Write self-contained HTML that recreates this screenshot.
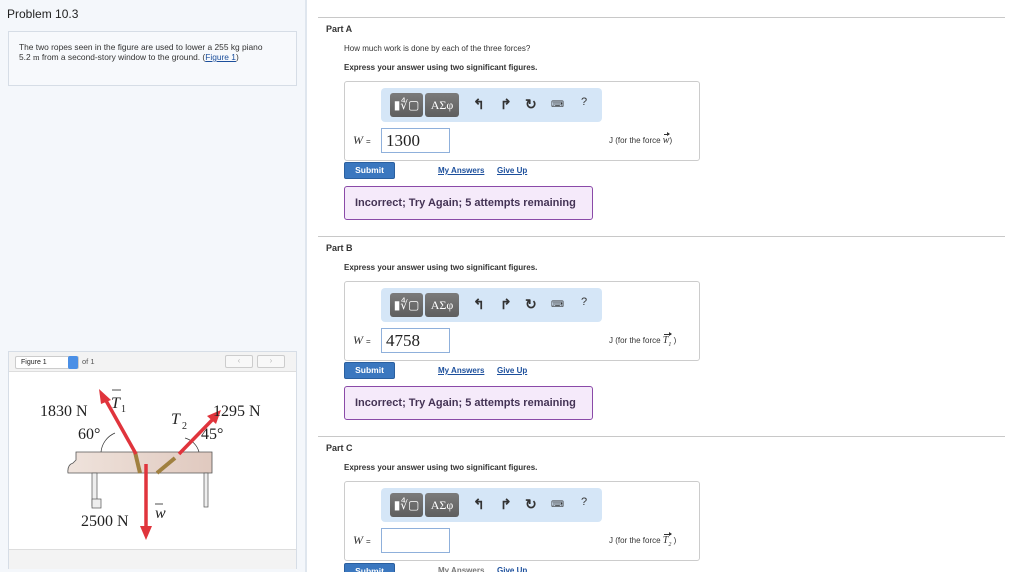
<!DOCTYPE html>
<html><head><meta charset="utf-8"><style>
*{margin:0;padding:0;box-sizing:border-box}
html,body{width:1024px;height:572px;overflow:hidden}
body{background:#fff;font-family:"Liberation Sans",Arial,sans-serif;color:#222;position:relative}
.a{position:absolute}
#left{left:0;top:0;width:307px;height:572px;background:#f4f7fb;border-right:2px solid #dfe6ee}
.line{height:1px;background:#c8c8c8;left:318px;width:687px}
.lbl{font-size:9px;font-weight:bold;color:#333}
.q{font-size:8px;color:#333}
.ex{font-size:8px;font-weight:bold;color:#333}
.box{left:344px;width:356px;height:80px;border:1px solid #ccc;border-radius:3px;background:#fff}
.tb{left:36px;top:6px;width:221px;height:34px;background:#d5e6f7;border-radius:4px}
.btn{top:5px;height:24px;background:linear-gradient(#7b7b7b,#5e5e5e);border-radius:3px;color:#fff;font-family:"Liberation Serif",serif;font-size:12px;text-align:center;line-height:24px}
.ic{top:8px;font-size:14px;font-weight:bold;color:#333}
.weq{left:8px;top:51px;font-family:"Liberation Serif",serif;font-style:italic;font-size:12px;color:#333}
.weq span{font-style:normal;font-size:8px;font-family:"Liberation Sans",sans-serif}
.inp{left:36px;top:46px;width:69px;height:25px;border:1px solid #8fb0db;font-family:"Liberation Serif",serif;font-size:17px;line-height:23px;padding-left:4px;color:#222}
.unit{left:264px;top:53px;font-size:8px;color:#333;white-space:nowrap}
.v{position:relative;display:inline-block;font-family:"Liberation Serif",serif;font-style:italic;font-size:10px}
.v:before{content:"";position:absolute;left:1px;right:0;top:-1px;border-top:1px solid #333}
.v:after{content:"";position:absolute;right:-1px;top:-3px;border-left:3px solid #333;border-top:2px solid transparent;border-bottom:2px solid transparent}
.sub{left:344px;width:51px;height:17px;background:#3a77bf;border:1px solid #2a5f9f;border-radius:2px;color:#fff;font-size:8.5px;font-weight:bold;text-align:center;line-height:15px}
.lk{font-size:8px;font-weight:bold;color:#1c4f9c;text-decoration:underline}
.fb{left:344px;width:249px;height:34px;background:#f5eafa;border:1px solid #8a4aa8;border-radius:3px;font-size:11px;font-weight:bold;color:#443355;line-height:32px;padding-left:10px}
</style></head><body>
<div id="left" class="a">
 <div class="a" style="left:7px;top:7px;font-size:12px;color:#222">Problem 10.3</div>
 <div class="a" style="left:8px;top:31px;width:289px;height:55px;background:#f7f9fc;border:1px solid #d6dde6;padding:10px 24px 10px 10px;font-size:8.4px;line-height:10px;color:#333">The two ropes seen in the figure are used to lower a 255 kg piano 5.2 <span style="font-family:'Liberation Serif',serif">m</span> from a second-story window to the ground. (<span style="color:#1c4f9c;text-decoration:underline">Figure 1</span>)</div>
 <div class="a" style="left:8px;top:351px;width:289px;height:218px;border:1px solid #d6dde6;background:#fff">
  <div class="a" style="left:0;top:0;width:287px;height:20px;background:#f3f3f3;border-bottom:1px solid #ddd"></div>
  <div class="a" style="left:6px;top:4px;width:64px;height:13px;background:#fff;border:1px solid #ccc;border-radius:2px;font-size:7px;padding-left:5px;line-height:11px">Figure 1</div>
  <div class="a" style="left:59px;top:4px;width:10px;height:13px;background:#4a8fe6;border-radius:2px"></div>
  <div class="a" style="left:73px;top:5px;font-size:7.5px;color:#555">of 1</div>
  <div class="a" style="left:216px;top:3px;width:28px;height:13px;border:1px solid #ccc;border-radius:2px;background:#f8f8f8;font-size:8px;color:#bbb;text-align:center">‹</div>
  <div class="a" style="left:248px;top:3px;width:28px;height:13px;border:1px solid #ccc;border-radius:2px;background:#f8f8f8;font-size:8px;color:#bbb;text-align:center">›</div>
  <div class="a" style="left:0;top:197px;width:287px;height:20px;background:#f3f3f3;border-top:1px solid #ddd"></div>
  <svg class="a" style="left:0;top:20px" width="287" height="177" viewBox="0 0 287 177" font-family="Liberation Serif,serif">
   <defs><linearGradient id="g" x1="0" x2="1"><stop offset="0" stop-color="#efe3dc"/><stop offset="1" stop-color="#e0c9bf"/></linearGradient></defs>
   <path d="M67 80 L203 80 L203 101 L67 101 L59 101 Q58 93 64 91 L67 88 Z" fill="url(#g)" stroke="#555" stroke-width="0.8"/>
   <rect x="83" y="101" width="5" height="33" fill="#eee" stroke="#555" stroke-width="0.7"/>
   <rect x="83" y="127" width="9" height="9" fill="#eee" stroke="#555" stroke-width="0.7"/>
   <rect x="195" y="101" width="4" height="34" fill="#eee" stroke="#555" stroke-width="0.7"/>
   <path d="M92 80 A23 23 0 0 1 106 61" fill="none" stroke="#333" stroke-width="0.7"/>
   <path d="M176 66 A20 20 0 0 1 190 80" fill="none" stroke="#333" stroke-width="0.7"/>
   <line x1="126" y1="80" x2="131" y2="101" stroke="#a08040" stroke-width="4"/>
   <line x1="148" y1="101" x2="166" y2="86" stroke="#a08040" stroke-width="4"/>
   <line x1="127" y1="82" x2="95" y2="25" stroke="#e0343c" stroke-width="3.5"/>
   <polygon points="90,17 102,28 92,32" fill="#e0343c"/>
   <line x1="170" y1="82" x2="206" y2="45" stroke="#e0343c" stroke-width="3.5"/>
   <polygon points="212,38 207,52 198,44" fill="#e0343c"/>
   <line x1="137" y1="92" x2="137" y2="156" stroke="#e0343c" stroke-width="3.5"/>
   <polygon points="131,154 143,154 137,168" fill="#e0343c"/>
   <g fill="#222" stroke="#222" stroke-width="0.8">
    <line x1="103" y1="18" x2="112" y2="18"/><line x1="146" y1="132" x2="154" y2="132"/>
   </g>
   <g font-size="16" fill="#222">
    <text x="31" y="44">1830 N</text><text x="204" y="44">1295 N</text>
    <text x="69" y="67">60°</text><text x="192" y="67">45°</text>
    <text x="72" y="154">2500 N</text>
    <text x="102" y="36" font-style="italic">T</text><text x="112" y="40" font-size="10">1</text>
    <text x="162" y="52" font-style="italic">T</text><text x="173" y="57" font-size="10">2</text>
    <text x="146" y="146" font-style="italic">w</text>
   </g>
  </svg>
 </div>
</div>

<!-- Part A -->
<div class="a line" style="top:17px"></div>
<div class="a lbl" style="left:326px;top:24px">Part A</div>
<div class="a q" style="left:344px;top:44px">How much work is done by each of the three forces?</div>
<div class="a ex" style="left:344px;top:63px">Express your answer using two significant figures.</div>
<div class="a box" style="top:81px">
 <div class="a tb"><div class="a btn" style="left:9px;width:33px">▮∜▢</div><div class="a btn" style="left:44px;width:34px">ΑΣφ</div>
 <div class="a ic" style="left:92px">↰</div><div class="a ic" style="left:119px">↱</div><div class="a ic" style="left:144px">↻</div><div class="a ic" style="left:170px;font-size:9px;top:11px;font-weight:normal">⌨</div><div class="a ic" style="left:200px;font-size:11px;font-weight:normal">?</div></div>
 <div class="a weq">W <span>=</span></div><div class="a inp">1300</div>
 <div class="a unit">J (for the force <span class="v">w</span>)</div>
</div>
<div class="a sub" style="top:162px">Submit</div>
<div class="a lk" style="left:438px;top:166px">My Answers</div><div class="a lk" style="left:497px;top:166px">Give Up</div>
<div class="a fb" style="top:186px">Incorrect; Try Again; 5 attempts remaining</div>

<!-- Part B -->
<div class="a line" style="top:236px"></div>
<div class="a lbl" style="left:326px;top:243px">Part B</div>
<div class="a ex" style="left:344px;top:263px">Express your answer using two significant figures.</div>
<div class="a box" style="top:281px">
 <div class="a tb"><div class="a btn" style="left:9px;width:33px">▮∜▢</div><div class="a btn" style="left:44px;width:34px">ΑΣφ</div>
 <div class="a ic" style="left:92px">↰</div><div class="a ic" style="left:119px">↱</div><div class="a ic" style="left:144px">↻</div><div class="a ic" style="left:170px;font-size:9px;top:11px;font-weight:normal">⌨</div><div class="a ic" style="left:200px;font-size:11px;font-weight:normal">?</div></div>
 <div class="a weq">W <span>=</span></div><div class="a inp">4758</div>
 <div class="a unit">J (for the force <span class="v">T<sub style="font-size:6px">1</sub></span> )</div>
</div>
<div class="a sub" style="top:362px">Submit</div>
<div class="a lk" style="left:438px;top:366px">My Answers</div><div class="a lk" style="left:497px;top:366px">Give Up</div>
<div class="a fb" style="top:386px">Incorrect; Try Again; 5 attempts remaining</div>

<!-- Part C -->
<div class="a line" style="top:436px"></div>
<div class="a lbl" style="left:326px;top:443px">Part C</div>
<div class="a ex" style="left:344px;top:463px">Express your answer using two significant figures.</div>
<div class="a box" style="top:481px">
 <div class="a tb"><div class="a btn" style="left:9px;width:33px">▮∜▢</div><div class="a btn" style="left:44px;width:34px">ΑΣφ</div>
 <div class="a ic" style="left:92px">↰</div><div class="a ic" style="left:119px">↱</div><div class="a ic" style="left:144px">↻</div><div class="a ic" style="left:170px;font-size:9px;top:11px;font-weight:normal">⌨</div><div class="a ic" style="left:200px;font-size:11px;font-weight:normal">?</div></div>
 <div class="a weq">W <span>=</span></div><div class="a inp"></div>
 <div class="a unit">J (for the force <span class="v">T<sub style="font-size:6px">2</sub></span> )</div>
</div>
<div class="a sub" style="top:563px">Submit</div>
<div class="a lk" style="left:438px;top:566px;color:#777">My Answers</div><div class="a lk" style="left:497px;top:566px">Give Up</div>
</body></html>
